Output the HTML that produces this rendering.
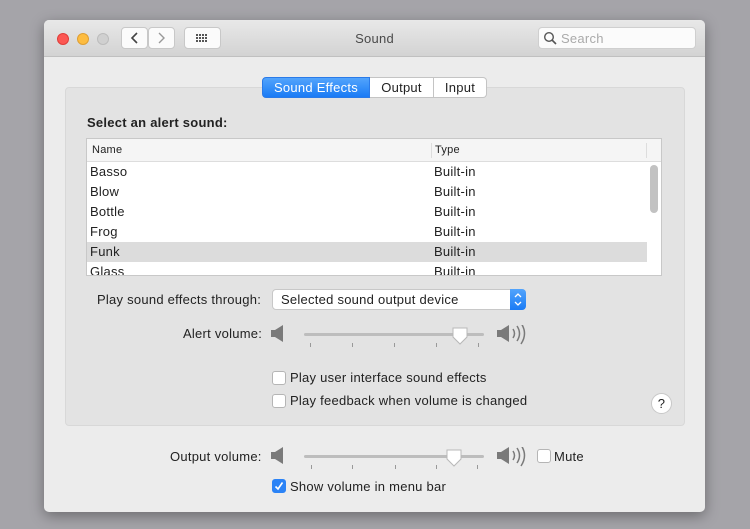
<!DOCTYPE html>
<html><head><meta charset="utf-8"><style>
*{box-sizing:border-box;margin:0;padding:0}
body{width:750px;height:529px;background:#a5a4a9;font-family:"Liberation Sans",sans-serif;font-size:13px;color:#222;position:relative;overflow:hidden;letter-spacing:0.25px}
.a{position:absolute}
#win{left:44px;top:20px;width:661px;height:492px;background:#ececec;border-radius:5px;box-shadow:0 4px 14px rgba(0,0,0,.35);overflow:hidden}
#tb{left:0;top:0;width:661px;height:37px;background:linear-gradient(#e8e8e8,#d3d3d3);border-bottom:1px solid #c0c0c0}
.dot{width:12px;height:12px;border-radius:50%;top:13px}
.btn{background:#fbfbfb;border:1px solid #c8c8c8;border-radius:4px;height:22px;top:7px}
#group{left:21px;top:67px;width:620px;height:339px;background:#e3e3e3;border:1px solid #d8d8d8;border-radius:4px}
.seg{top:57px;height:21px;border:1px solid #c4c4c4;background:#fff;text-align:center;line-height:19px;font-size:13px}
#tbl{left:42px;top:118px;width:576px;height:138px;background:#fff;border:1px solid #c8c8c8;overflow:hidden}
.row{position:absolute;left:0;width:560px;height:20px;line-height:20px;font-size:13px}
.row span{position:absolute}
.cb{width:14px;height:14px;border:1px solid #b5b5b5;border-radius:3px;background:#fff}
.tick{width:1px;height:4px;background:#999}
.track{height:3px;background:#bdbdbd;border-radius:2px}
</style></head><body>
<div id="win" class="a">
 <div id="tb" class="a">
  <div class="a dot" style="left:13px;background:#fc5753;border:1px solid #df3e3a"></div>
  <div class="a dot" style="left:33px;background:#fdbc40;border:1px solid #de9f34"></div>
  <div class="a dot" style="left:53px;background:#d0d0d0;border:1px solid #bcbcbc"></div>
  <div class="a btn" style="left:77px;width:27px"><svg width="27" height="22" class="a" style="left:-1px;top:-1px"><path d="M16 6 L11 11 L16 16" fill="none" stroke="#444" stroke-width="1.6"/></svg></div>
  <div class="a btn" style="left:104px;width:27px"><svg width="27" height="22" class="a" style="left:-1px;top:-1px"><path d="M11 6 L16 11 L11 16" fill="none" stroke="#999" stroke-width="1.4"/></svg></div>
  <div class="a btn" style="left:140px;width:37px"><svg width="37" height="22" class="a" style="left:-1px;top:-1px"><g fill="#555"><rect x="12" y="7" width="2" height="2"/><rect x="15" y="7" width="2" height="2"/><rect x="18" y="7" width="2" height="2"/><rect x="21" y="7" width="2" height="2"/><rect x="12" y="10" width="2" height="2"/><rect x="15" y="10" width="2" height="2"/><rect x="18" y="10" width="2" height="2"/><rect x="21" y="10" width="2" height="2"/><rect x="12" y="13" width="2" height="2"/><rect x="15" y="13" width="2" height="2"/><rect x="18" y="13" width="2" height="2"/><rect x="21" y="13" width="2" height="2"/></g></svg></div>
  <div class="a" style="left:0;width:661px;top:11px;text-align:center;color:#4a4a4a">Sound</div>
  <div class="a" style="left:494px;top:7px;width:158px;height:22px;background:#fbfbfb;border:1px solid #cfcfcf;border-radius:4px"><svg class="a" style="left:4px;top:3px" width="14" height="14"><circle cx="6" cy="6" r="4.3" fill="none" stroke="#555" stroke-width="1.4"/><path d="M9 9 L13 13" stroke="#555" stroke-width="1.6"/></svg><span class="a" style="left:22px;top:3px;color:#aaa">Search</span></div>
 </div>
 <div id="group" class="a"></div>
 <div class="a seg" style="left:218px;width:108px;background:linear-gradient(#52a4fc,#1a7bf5);color:#fff;border-color:#2a7ae8;border-radius:4px 0 0 4px">Sound Effects</div>
 <div class="a seg" style="left:326px;width:64px;border-left:none">Output</div>
 <div class="a seg" style="left:390px;width:53px;border-left:none;border-radius:0 4px 4px 0">Input</div>
 <div class="a" style="left:43px;top:95px;font-weight:bold">Select an alert sound:</div>
 <div id="tbl" class="a">
  <div class="a" style="left:0;top:0;width:576px;height:23px;background:#f5f5f5;border-bottom:1px solid #ddd;font-size:11px;line-height:22px"><span class="a" style="left:5px">Name</span><span class="a" style="left:344px;top:4px;height:15px;border-left:1px solid #ddd"></span><span class="a" style="left:348px">Type</span><span class="a" style="left:559px;top:4px;height:15px;border-left:1px solid #ddd"></span></div>
  <div class="row" style="top:23px"><span style="left:3px">Basso</span><span style="left:347px">Built-in</span></div>
  <div class="row" style="top:43px"><span style="left:3px">Blow</span><span style="left:347px">Built-in</span></div>
  <div class="row" style="top:63px"><span style="left:3px">Bottle</span><span style="left:347px">Built-in</span></div>
  <div class="row" style="top:83px"><span style="left:3px">Frog</span><span style="left:347px">Built-in</span></div>
  <div class="row" style="top:103px;background:#dcdcdc"><span style="left:3px">Funk</span><span style="left:347px">Built-in</span></div>
  <div class="row" style="top:123px"><span style="left:3px">Glass</span><span style="left:347px">Built-in</span></div>
  <div class="a" style="left:563px;top:26px;width:8px;height:48px;background:#c2c2c2;border-radius:4px"></div>
 </div>
 <div class="a" style="left:53px;top:272px">Play sound effects through:</div>
 <div class="a" style="left:228px;top:269px;width:254px;height:21px;background:#fff;border:1px solid #c8c8c8;border-radius:4px;line-height:19px;padding-left:8px">Selected sound output device</div>
 <div class="a" style="left:466px;top:269px;width:16px;height:21px;background:linear-gradient(#52a4fc,#1a7bf5);border-radius:0 4px 4px 0"><svg width="16" height="21"><path d="M5 8 L8 5 L11 8 M5 13 L8 16 L11 13" fill="none" stroke="#fff" stroke-width="1.3"/></svg></div>

 <div class="a" style="left:139px;top:306px">Alert volume:</div>
 <svg class="a" style="left:226px;top:305px" width="260" height="30">
  <path d="M1 5 H5 L13 0 V17 L5 12 H1Z" fill="#7a7a7a"/>
  <g transform="translate(226,0)"><path d="M1 5 H5 L13 0 V17 L5 12 H1Z" fill="#7a7a7a"/><path d="M17 4 Q20 8.5 17 13 M21 1 Q26 8.5 21 16 M25 -2 Q32 8.5 25 19" fill="none" stroke="#7a7a7a" stroke-width="1.5"/></g>
 </svg>
 <div class="a track" style="left:260px;top:313px;width:180px"></div>
 <div class="a tick" style="left:266px;top:323px"></div><div class="a tick" style="left:308px;top:323px"></div><div class="a tick" style="left:350px;top:323px"></div><div class="a tick" style="left:392px;top:323px"></div><div class="a tick" style="left:434px;top:323px"></div>
 <svg class="a" style="left:407px;top:306px" width="18" height="20"><path d="M2 2 H16 V11 L9 18 L2 11Z" fill="#fff" stroke="#b8b8b8"/></svg>

 <div class="a cb" style="left:228px;top:351px"></div><div class="a" style="left:246px;top:350px">Play user interface sound effects</div>
 <div class="a cb" style="left:228px;top:374px"></div><div class="a" style="left:246px;top:373px">Play feedback when volume is changed</div>
 <div class="a" style="left:607px;top:373px;width:21px;height:21px;border-radius:50%;background:#fff;border:1px solid #c8c8c8;text-align:center;line-height:19px;font-size:13px">?</div>

 <div class="a" style="left:126px;top:429px">Output volume:</div>
 <svg class="a" style="left:226px;top:427px" width="260" height="30">
  <path d="M1 5 H5 L13 0 V17 L5 12 H1Z" fill="#7a7a7a"/>
  <g transform="translate(226,0)"><path d="M1 5 H5 L13 0 V17 L5 12 H1Z" fill="#7a7a7a"/><path d="M17 4 Q20 8.5 17 13 M21 1 Q26 8.5 21 16 M25 -2 Q32 8.5 25 19" fill="none" stroke="#7a7a7a" stroke-width="1.5"/></g>
 </svg>
 <div class="a track" style="left:260px;top:435px;width:180px"></div>
 <div class="a tick" style="left:267px;top:445px"></div><div class="a tick" style="left:308px;top:445px"></div><div class="a tick" style="left:351px;top:445px"></div><div class="a tick" style="left:392px;top:445px"></div><div class="a tick" style="left:433px;top:445px"></div>
 <svg class="a" style="left:401px;top:428px" width="18" height="20"><path d="M2 2 H16 V11 L9 18 L2 11Z" fill="#fff" stroke="#b8b8b8"/></svg>
 <div class="a cb" style="left:493px;top:429px"></div><div class="a" style="left:510px;top:429px">Mute</div>
 <div class="a cb" style="left:228px;top:459px;background:#2b83f6;border-color:#2b83f6"><svg class="a" style="left:0;top:0" width="12" height="12"><path d="M2.5 6.5 L5 9 L9.5 2.5" fill="none" stroke="#fff" stroke-width="1.6"/></svg></div>
 <div class="a" style="left:246px;top:459px">Show volume in menu bar</div>
</div>
</body></html>
